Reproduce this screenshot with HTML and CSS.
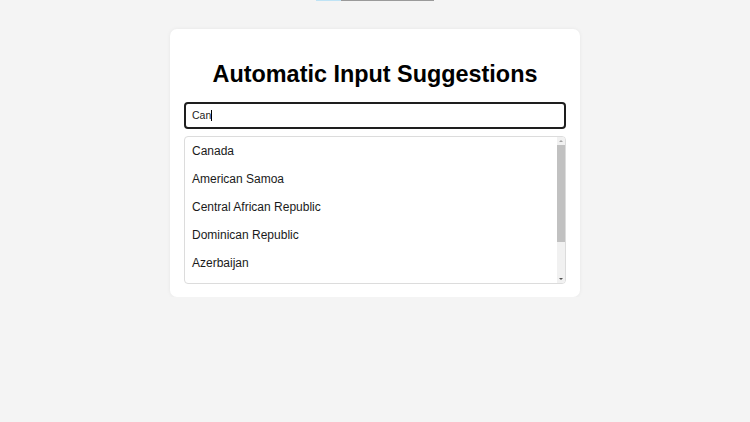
FILE: index.html
```html
<!DOCTYPE html>
<html lang="en">
<head>
<meta charset="utf-8">
<title>Automatic Input Suggestions</title>
<link rel="stylesheet" href="styles.css">
</head>
<body>
<div class="topbar"><div class="topbar-fill"></div></div>
<main class="card">
  <h1 class="title">Automatic Input Suggestions</h1>
  <div class="field">Can<span class="caret"></span></div>
  <div class="suggestions">
    <ul class="items">
      <li class="item">Canada</li>
      <li class="item">American Samoa</li>
      <li class="item">Central African Republic</li>
      <li class="item">Dominican Republic</li>
      <li class="item">Azerbaijan</li>
    </ul>
    <div class="scrollbar">
      <div class="arrow arrow-up"></div>
      <div class="track"><div class="thumb"></div></div>
      <div class="arrow arrow-down"></div>
    </div>
  </div>
</main>
</body>
</html>
```
FILE: styles.css
```css
html, body {
  margin: 0;
  padding: 0;
  background: #f4f4f4;
  font-family: "Liberation Sans", Arial, sans-serif;
  color: #111;
}
body {
  display: flex;
  flex-direction: column;
  align-items: center;
}
.topbar {
  width: 118px;
  height: 1px;
  background: #9a9a9a;
  display: flex;
}
.topbar-fill {
  width: 25px;
  background: #bfe3f5;
}
.card {
  margin-top: 28px;
  width: 410px;
  height: 268px;
  box-sizing: border-box;
  padding: 0 14px;
  background: #fff;
  border-radius: 7px;
  box-shadow: 0 0 4px rgba(0,0,0,0.06);
}
.title {
  margin: 31px 0 0;
  font-size: 23.4px;
  line-height: 28px;
  font-weight: bold;
  text-align: center;
  color: #000;
}
.field {
  margin-top: 14px;
  height: 27px;
  box-sizing: border-box;
  border: 2px solid #1e1e1e;
  border-radius: 4px;
  padding: 0 6px;
  font-size: 10.5px;
  line-height: 23px;
  color: #222;
  display: flex;
  align-items: center;
}
.caret {
  display: inline-block;
  width: 1px;
  height: 11px;
  background: #000;
}
.suggestions {
  margin-top: 7px;
  height: 148px;
  box-sizing: border-box;
  border: 1px solid #dcdcdc;
  border-radius: 4px;
  display: flex;
  overflow: hidden;
}
.items {
  list-style: none;
  margin: 0;
  padding: 0;
  flex: 1;
}
.item {
  padding: 7px 7px;
  font-size: 12px;
  line-height: 14px;
  color: #1a1a1a;
}
.scrollbar {
  width: 8px;
  display: flex;
  flex-direction: column;
  background: #f1f1f1;
}
.arrow {
  height: 8px;
  display: flex;
  align-items: center;
  justify-content: center;
}
.arrow::before {
  content: "";
  width: 0;
  height: 0;
  border-left: 2px solid transparent;
  border-right: 2px solid transparent;
}
.arrow-up::before {
  border-bottom: 2px solid #a3a3a3;
}
.arrow-down::before {
  border-top: 2px solid #505050;
}
.track {
  flex: 1;
}
.thumb {
  height: 97px;
  background: #c1c1c1;
}
```
